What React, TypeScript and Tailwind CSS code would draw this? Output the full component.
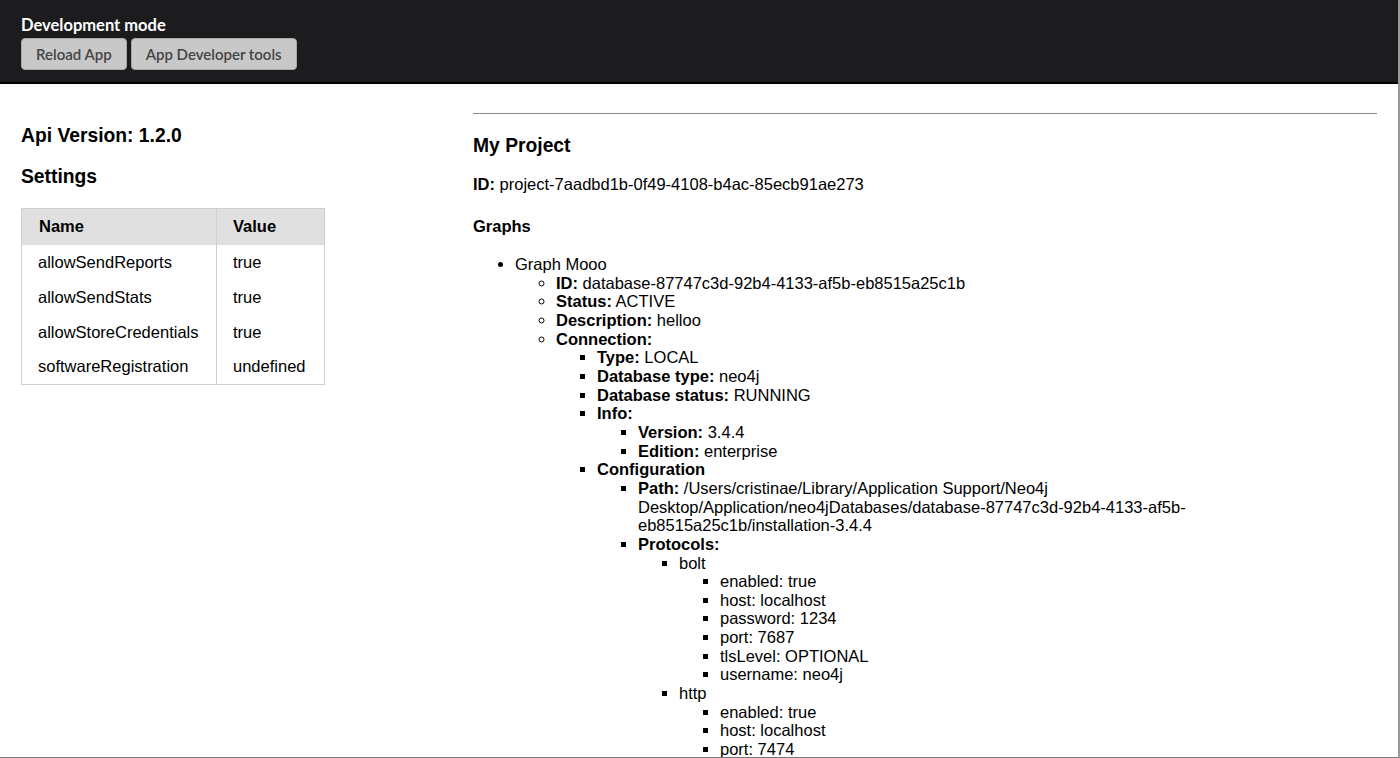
const settings = [
  { name: "allowSendReports", value: "true" },
  { name: "allowSendStats", value: "true" },
  { name: "allowStoreCredentials", value: "true" },
  { name: "softwareRegistration", value: "undefined" },
];

const KV = ({ k, v }: { k: string; v?: string }) => (
  <>
    <b>{k}</b>
    {v !== undefined ? ` ${v}` : null}
  </>
);

const App = () => {
  return (
    <div className="h-screen overflow-hidden bg-white border-r-2 border-b border-r-[#9a9a9a] border-b-[#777]">
      <header className="bg-[#1c1c1e] border-b-2 border-black px-[21px] pt-[14px] pb-[12px] font-['Lato','Noto_Sans',sans-serif]">
        <h1 className="text-white text-[16.5px] font-bold leading-[22px]">Development mode</h1>
        <div className="mt-[2px] flex gap-[4px]">
          <button className="h-[32px] px-[14px] rounded-[4px] bg-[#c8c8c8] border border-[#a8a8a8] text-[#444] text-[15px] font-semibold">
            Reload App
          </button>
          <button className="h-[32px] px-[14px] rounded-[4px] bg-[#c8c8c8] border border-[#a8a8a8] text-[#444] text-[15px] font-semibold">
            App Developer tools
          </button>
        </div>
      </header>

      <main className="grid grid-cols-3 px-[21px] font-['Liberation_Sans',Arial,sans-serif] text-[16.5px] text-black">
        <section className="pt-[41px]">
          <h3 className="text-[19.3px] leading-[22px] font-bold">Api Version: 1.2.0</h3>
          <h3 className="mt-[19px] text-[19.3px] leading-[22px] font-bold">Settings</h3>
          <table className="mt-[20px] border border-[#cfcfcf] border-collapse w-[304px]">
            <thead>
              <tr className="bg-[#e0e0e0] h-[36px]">
                <th className="text-left font-bold pl-[17px] w-[195px] border-r border-[#cfcfcf]">Name</th>
                <th className="text-left font-bold pl-[16px]">Value</th>
              </tr>
            </thead>
            <tbody>
              {settings.map((s) => (
                <tr key={s.name} className="h-[35px]">
                  <td className="pl-[16px] border-r border-[#cfcfcf]">{s.name}</td>
                  <td className="pl-[16px]">{s.value}</td>
                </tr>
              ))}
            </tbody>
          </table>
        </section>

        <section className="col-span-2 pt-[29px]">
          <hr className="border-0 border-t border-t-[#8a8a8a] h-0" />
          <h3 className="mt-[21px] text-[19.3px] leading-[22px] font-bold">My Project</h3>
          <p className="mt-[18px] leading-[18.5px]">
            <KV k="ID:" v="project-7aadbd1b-0f49-4108-b4ac-85ecb91ae273" />
          </p>
          <h4 className="mt-[23px] font-bold leading-[18.5px]">Graphs</h4>
          <ul className="mt-[20px] pl-[42px] list-disc leading-[18.65px]">
            <li>
              Graph Mooo
              <ul className="pl-[41px] list-[circle]">
                <li><KV k="ID:" v="database-87747c3d-92b4-4133-af5b-eb8515a25c1b" /></li>
                <li><KV k="Status:" v="ACTIVE" /></li>
                <li><KV k="Description:" v="helloo" /></li>
                <li>
                  <KV k="Connection:" />
                  <ul className="pl-[41px] list-[square]">
                    <li><KV k="Type:" v="LOCAL" /></li>
                    <li><KV k="Database type:" v="neo4j" /></li>
                    <li><KV k="Database status:" v="RUNNING" /></li>
                    <li>
                      <KV k="Info:" />
                      <ul className="pl-[41px] list-[square]">
                        <li><KV k="Version:" v="3.4.4" /></li>
                        <li><KV k="Edition:" v="enterprise" /></li>
                      </ul>
                    </li>
                    <li>
                      <KV k="Configuration" />
                      <ul className="pl-[41px] list-[square] w-[600px]">
                        <li>
                          <KV
                            k="Path:"
                            v="/Users/cristinae/Library/Application Support/Neo4j Desktop/Application/neo4jDatabases/database-87747c3d-92b4-4133-af5b-eb8515a25c1b/installation-3.4.4"
                          />
                        </li>
                        <li>
                          <KV k="Protocols:" />
                          <ul className="pl-[41px] list-[square]">
                            <li>
                              bolt
                              <ul className="pl-[41px] list-[square]">
                                <li>enabled: true</li>
                                <li>host: localhost</li>
                                <li>password: 1234</li>
                                <li>port: 7687</li>
                                <li>tlsLevel: OPTIONAL</li>
                                <li>username: neo4j</li>
                              </ul>
                            </li>
                            <li>
                              http
                              <ul className="pl-[41px] list-[square]">
                                <li>enabled: true</li>
                                <li>host: localhost</li>
                                <li>port: 7474</li>
                              </ul>
                            </li>
                          </ul>
                        </li>
                      </ul>
                    </li>
                  </ul>
                </li>
              </ul>
            </li>
          </ul>
        </section>
      </main>
    </div>
  );
};

export default App;
